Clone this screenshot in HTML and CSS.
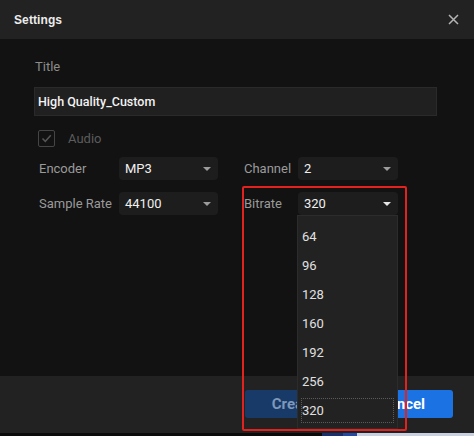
FILE: index.html
```html
<!DOCTYPE html>
<html lang="en">
<head>
<meta charset="utf-8">
<title>Settings</title>
<link rel="stylesheet" href="styles.css">
</head>
<body>
<div class="dialog">
  <header class="titlebar">
    <h1 class="title">Settings</h1>
    <button class="close" aria-label="Close">
      <svg width="11" height="11" viewBox="0 0 11 11"><path d="M1 1 L10 10 M10 1 L1 10" stroke="#b4b4b4" stroke-width="1.5" fill="none"/></svg>
    </button>
  </header>

  <main class="content">
    <div class="field-label">Title</div>
    <div class="text-input">High Quality_Custom</div>

    <div class="check-row">
      <span class="checkbox">
        <svg width="13" height="13" viewBox="0 0 13 13"><path d="M2.5 6.5 L5.3 9.3 L10.8 3.3" stroke="#555" stroke-width="1.5" fill="none"/></svg>
      </span>
      <span class="check-label">Audio</span>
    </div>

    <div class="options">
      <div class="opt-row">
        <div class="opt opt-left">
          <span class="opt-label">Encoder</span>
          <div class="select select-left"><span>MP3</span><i class="caret"></i></div>
        </div>
        <div class="opt opt-right">
          <span class="opt-label">Channel</span>
          <div class="select select-right"><span>2</span><i class="caret"></i></div>
        </div>
      </div>
      <div class="opt-row">
        <div class="opt opt-left">
          <span class="opt-label">Sample Rate</span>
          <div class="select select-left"><span>44100</span><i class="caret"></i></div>
        </div>
        <div class="opt opt-right">
          <span class="opt-label">Bitrate</span>
          <div class="select select-right open"><span>320</span><i class="caret caret-bright"></i>
            <ul class="menu">
              <li class="menu-item">64</li>
              <li class="menu-item">96</li>
              <li class="menu-item">128</li>
              <li class="menu-item">160</li>
              <li class="menu-item">192</li>
              <li class="menu-item">256</li>
              <li class="menu-item focused">320</li>
            </ul>
          </div>
        </div>
      </div>
    </div>
  </main>

  <footer class="actions">
    <button class="btn btn-create">Create</button>
    <button class="btn btn-cancel">Cancel</button>
  </footer>

  <div class="taskbar">
    <span class="tb-gap"></span>
    <span class="tb-dark"></span>
    <span class="tb-blue"></span>
    <span class="tb-light"></span>
  </div>

  <div class="highlight"></div>
</div>
</body>
</html>
```

FILE: styles.css
```css
* { box-sizing: border-box; }

html, body {
  margin: 0;
  padding: 0;
  background: #121212;
}

.dialog {
  position: relative;
  width: 474px;
  height: 436px;
  overflow: hidden;
  display: flex;
  flex-direction: column;
  font-family: Roboto, "Liberation Sans", sans-serif;
  background: #121212;
}

/* title bar */
.titlebar {
  height: 39px;
  flex: none;
  display: flex;
  align-items: center;
  justify-content: space-between;
  padding: 0 15px 0 14px;
  background: #222222;
}

.title {
  margin: 0;
  font-family: "Liberation Sans", Arial, sans-serif;
  font-size: 12px;
  font-weight: bold;
  color: #ececec;
  letter-spacing: 0.1px;
}

.close {
  background: none;
  border: 0;
  padding: 0;
  width: 11px;
  height: 11px;
  display: flex;
}

/* form body */
.content {
  flex: none;
  height: 337px;
  padding: 20px 37px 0 34px;
  display: flex;
  flex-direction: column;
}

.field-label {
  font-size: 13px;
  line-height: 16px;
  color: #8c8c8c;
  padding-left: 1px;
}

.text-input {
  margin-top: 12px;
  height: 29px;
  width: 403px;
  background: #202020;
  border: 1px solid #2a2a2a;
  display: flex;
  align-items: center;
  padding-left: 3px;
  font-size: 12.5px;
  font-weight: 500;
  color: #f2f2f2;
}

.check-row {
  margin-top: 13px;
  height: 18px;
  display: flex;
  align-items: center;
  padding-left: 4px;
}

.checkbox {
  width: 17px;
  height: 17px;
  border: 1.5px solid #454545;
  border-radius: 2px;
  display: flex;
  align-items: center;
  justify-content: center;
}

.check-label {
  margin-left: 13px;
  font-size: 13px;
  color: #5c5c5c;
}

.options {
  margin-top: 10px;
  padding-left: 5px;
  display: flex;
  flex-direction: column;
  gap: 12px;
}

.opt-row {
  display: flex;
  height: 23px;
}

.opt {
  display: flex;
  align-items: center;
}

.opt-left .opt-label { width: 80px; }
.opt-right { margin-left: 26px; }
.opt-right .opt-label { width: 54px; }

.opt-label {
  font-size: 13px;
  color: #9a9a9a;
}

.select {
  position: relative;
  height: 23px;
  background: #1d1d1d;
  border-radius: 4px;
  display: flex;
  align-items: center;
  padding: 0 6px 0 6px;
  font-size: 13px;
  color: #f0f0f0;
}

.select-left { width: 99px; }
.select-right { width: 100px; }

.caret {
  margin-left: auto;
  margin-right: 1px;
  width: 0;
  height: 0;
  border-left: 4px solid transparent;
  border-right: 4px solid transparent;
  border-top: 4px solid #9c9c9c;
}

.caret-bright { border-top-color: #e6e6e6; }

/* open bitrate list */
.menu {
  position: absolute;
  top: 23px;
  left: -1px;
  width: 101px;
  height: 214px;
  margin: 0;
  padding: 6px 1px 0 1px;
  list-style: none;
  background: #222222;
  border: 1px solid #2c2c2c;
  z-index: 2;
}

.menu-item {
  height: 29px;
  line-height: 29px;
  padding-left: 3px;
  font-size: 13px;
  color: #e0e0e0;
}

.menu-item.focused {
  outline: 1px dotted #5a5a5a;
  outline-offset: -3px;
}

/* footer buttons */
.actions {
  flex: none;
  height: 57px;
  background: #222222;
  display: flex;
  justify-content: flex-end;
  align-items: flex-start;
  gap: 8px;
  padding: 14px 21px 0 0;
}

.btn {
  height: 28px;
  border: 0;
  border-radius: 3px;
  font-family: Roboto, "Liberation Sans", sans-serif;
  font-size: 15px;
  font-weight: bold;
}

.btn-create {
  width: 98px;
  background: #183a68;
  color: #7f97b8;
}

.btn-cancel {
  width: 102px;
  background: #1b72e3;
  color: #ffffff;
}

/* desktop strip under the window */
.taskbar {
  flex: none;
  height: 3px;
  display: flex;
  background: #0b0b0b;
}

.tb-gap { width: 322px; }
.tb-dark { width: 21px; background: #1a2f6e; }
.tb-blue { width: 14px; background: #2549a2; }
.tb-light { flex: 1; background: #c9d1e1; }

/* red annotation frame around the bitrate field */
.highlight {
  position: absolute;
  left: 242px;
  top: 186px;
  width: 165px;
  height: 245px;
  border: 2px solid #e2221e;
  border-radius: 2px;
  z-index: 3;
  pointer-events: none;
}
```
